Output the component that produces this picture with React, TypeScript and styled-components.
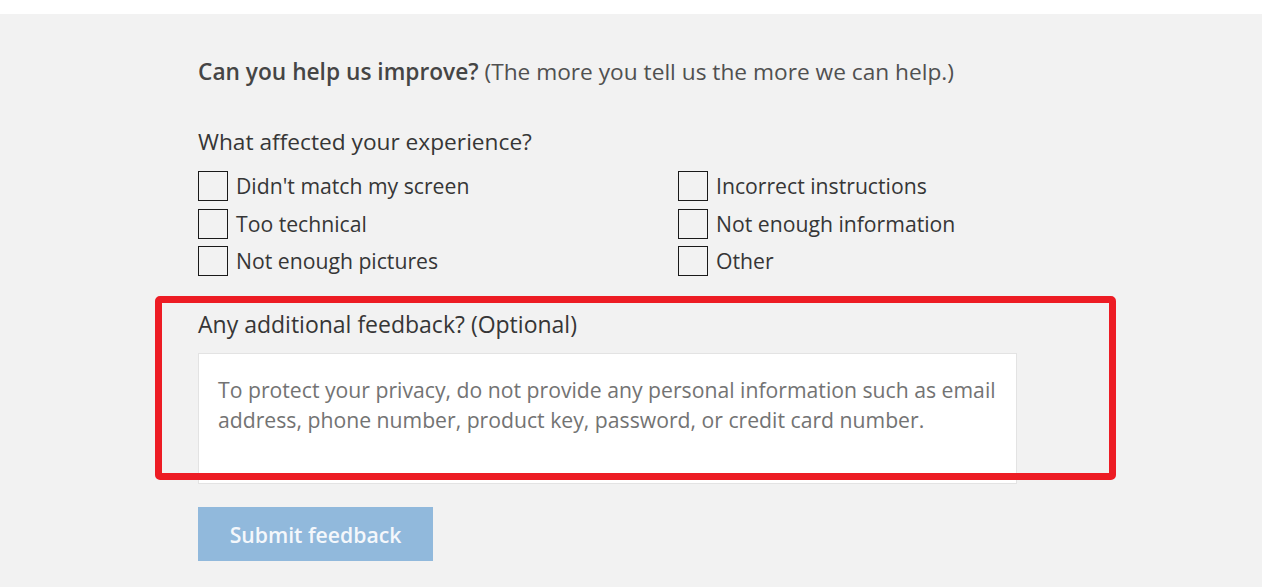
import React from "react";
import styled, { createGlobalStyle } from "styled-components";

const Global = createGlobalStyle`
  html, body { margin: 0; padding: 0; background: #f2f2f2; }
  body { font-family: "Open Sans", "Noto Sans", sans-serif; }
`;

const TopStrip = styled.div`
  height: 14px;
  background: #ffffff;
`;

const Page = styled.main`
  padding: 43px 0 26px 198px;
  color: #363636;
  font-size: 21.2px;
  line-height: 30px;
`;

const Intro = styled.p`
  margin: 0;
  font-size: 22.7px;
  color: #505050;
`;

const Bold = styled.strong`
  font-weight: 600;
  color: #454545;
`;

const Question = styled.p`
  margin: 40px 0 14px;
  font-size: 22.7px;
`;

const Options = styled.div`
  display: grid;
  grid-template-columns: 480px 480px;
  row-gap: 7.5px;
`;

const Option = styled.label`
  display: flex;
  align-items: center;
  gap: 8px;
  height: 30px;
`;

const Box = styled.span`
  width: 28px;
  height: 28px;
  border: 1px solid #1a1a1a;
  box-sizing: content-box;
  flex: none;
`;

const Feedback = styled.section`
  position: relative;
  margin-top: 33px;
`;

const Highlight = styled.div`
  position: absolute;
  left: -43px;
  top: -13px;
  width: 961px;
  height: 184px;
  box-sizing: border-box;
  border: 7px solid #ed1c24;
  border-radius: 5px;
  pointer-events: none;
  z-index: 2;
`;

const Label = styled.p`
  margin: 0 0 14px;
  font-size: 23px;
`;

const Area = styled.textarea`
  display: block;
  width: 819px;
  height: 131px;
  box-sizing: border-box;
  padding: 21px 19px;
  border: 1px solid #e3e3e3;
  background: #ffffff;
  font-family: inherit;
  font-size: 21.2px;
  line-height: 30px;
  resize: none;
  outline: none;
  &::placeholder { color: #737373; opacity: 1; }
`;

const Submit = styled.button`
  margin-top: 23px;
  width: 235px;
  height: 54px;
  border: none;
  background: #91b9dc;
  color: #f4f7fb;
  font-family: inherit;
  font-size: 21.2px;
  font-weight: 600;
  padding: 0;
`;

const options = [
  "Didn't match my screen",
  "Incorrect instructions",
  "Too technical",
  "Not enough information",
  "Not enough pictures",
  "Other",
];

export default function App() {
  return (
    <>
      <Global />
      <TopStrip />
      <Page>
        <Intro>
          <Bold>Can you help us improve?</Bold> (The more you tell us the more we can help.)
        </Intro>
        <Question>What affected your experience?</Question>
        <Options>
          {options.map((o) => (
            <Option key={o}>
              <Box />
              {o}
            </Option>
          ))}
        </Options>
        <Feedback>
          <Highlight />
          <Label>Any additional feedback? (Optional)</Label>
          <Area placeholder="To protect your privacy, do not provide any personal information such as email address, phone number, product key, password, or credit card number." />
        </Feedback>
        <Submit>Submit feedback</Submit>
      </Page>
    </>
  );
}
